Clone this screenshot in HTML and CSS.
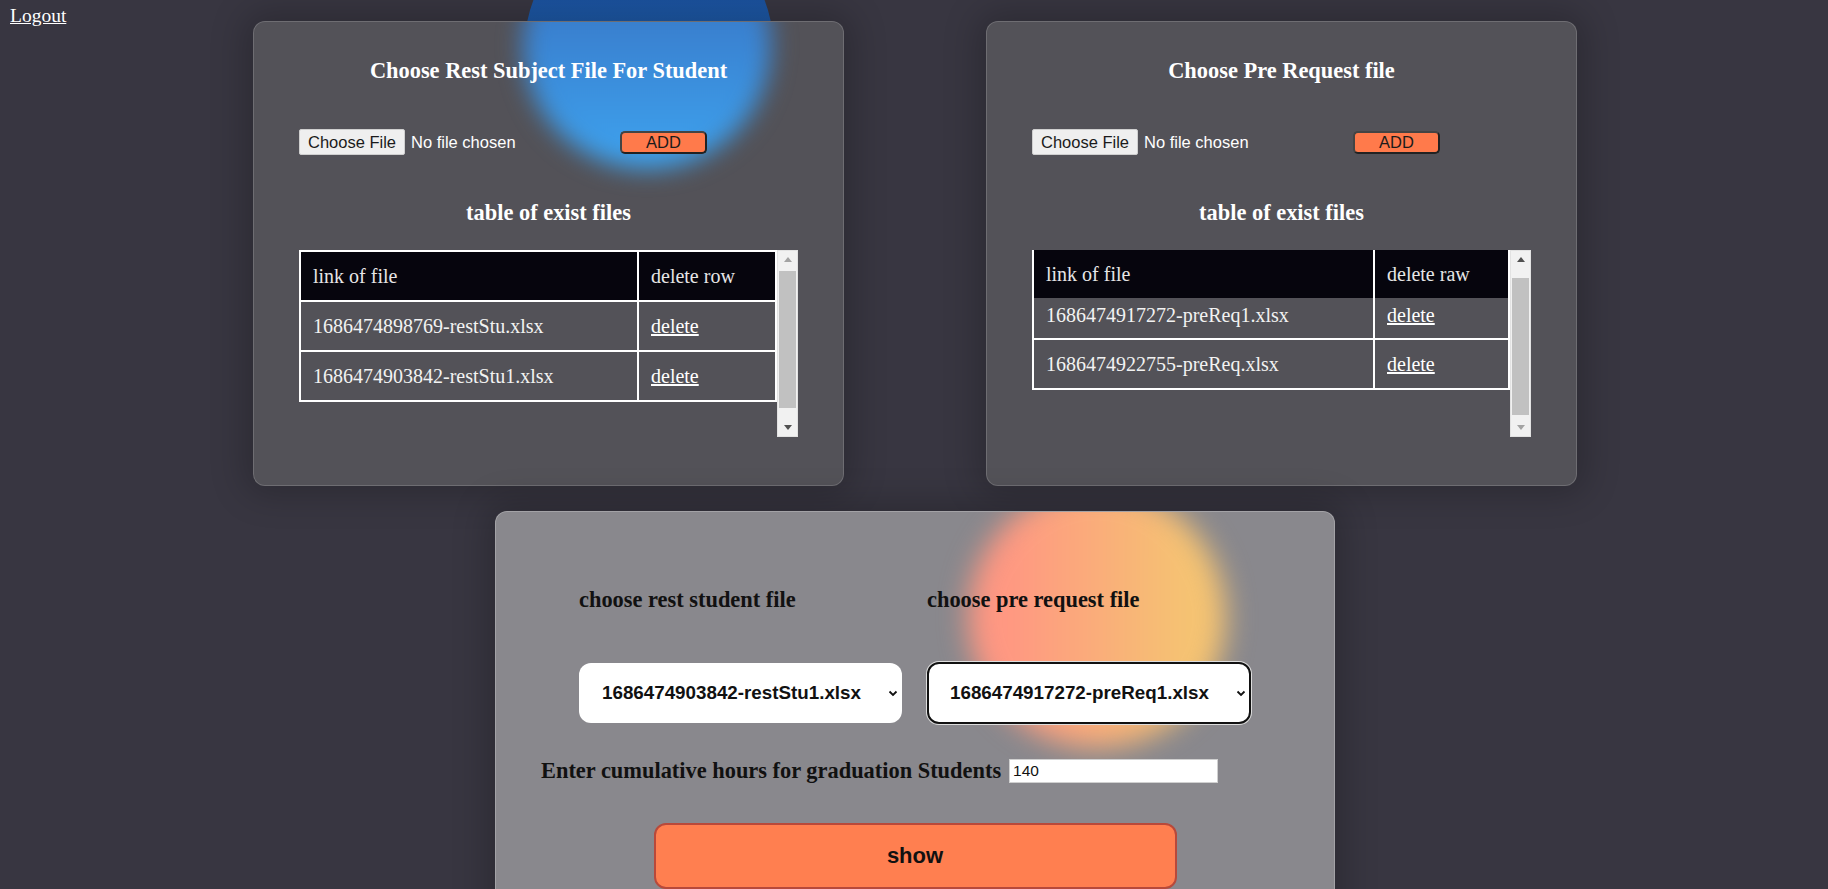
FILE: index.html
```html
<!DOCTYPE html>
<html lang="en">
<head>
    <meta charset="UTF-8">
    <meta name="viewport" content="width=device-width, initial-scale=1.0">
    <title>Upload Files</title>
    <link rel="stylesheet" href="styles.css">
</head>
<body>
    <a href="#" class="logout">Logout</a>
    <div class="blob-blue"></div>

    <div class="top-row">
        <div class="card">
            <div class="glow glow-blue"></div>
            <h3>Choose Rest Subject File For Student</h3>
            <div class="file-row">
                <div class="file-input">
                    <button class="file-btn">Choose File</button>
                    <span class="file-name">No file chosen</span>
                </div>
                <button class="add-btn">ADD</button>
            </div>
            <h3 class="table-title">table of exist files</h3>
            <div class="table-box">
                <div class="table-view">
                    <table class="files">
                        <thead>
                            <tr><th>link of file</th><th class="col-del">delete row</th></tr>
                        </thead>
                        <tbody>
                            <tr><td>1686474898769-restStu.xlsx</td><td><a href="#">delete</a></td></tr>
                            <tr><td>1686474903842-restStu1.xlsx</td><td><a href="#">delete</a></td></tr>
                        </tbody>
                    </table>
                </div>
                <div class="scrollbar">
                    <span class="arrow up off"></span>
                    <div class="track"><div class="thumb thumb-top"></div></div>
                    <span class="arrow down"></span>
                </div>
            </div>
        </div>

        <div class="card">
            <h3>Choose Pre Request file</h3>
            <div class="file-row">
                <div class="file-input">
                    <button class="file-btn">Choose File</button>
                    <span class="file-name">No file chosen</span>
                </div>
                <button class="add-btn">ADD</button>
            </div>
            <h3 class="table-title">table of exist files</h3>
            <div class="table-box">
                <div class="table-view">
                    <table class="files scrolled">
                        <thead>
                            <tr><th>link of file</th><th class="col-del-2">delete raw</th></tr>
                        </thead>
                        <tbody>
                            <tr class="cut"><td>1686474917272-preReq1.xlsx</td><td><a href="#">delete</a></td></tr>
                            <tr><td>1686474922755-preReq.xlsx</td><td><a href="#">delete</a></td></tr>
                        </tbody>
                    </table>
                </div>
                <div class="scrollbar">
                    <span class="arrow up"></span>
                    <div class="track"><div class="thumb thumb-bottom"></div></div>
                    <span class="arrow down off"></span>
                </div>
            </div>
        </div>
    </div>

    <div class="bottom-card">
        <div class="glow glow-orange"></div>
        <div class="choose-grid">
            <h3>choose rest student file</h3>
            <h3>choose pre request file</h3>
            <div class="select-box">
                <span>1686474903842-restStu1.xlsx</span>
                <svg width="10" height="7" viewBox="0 0 10 7"><path d="M1.5 1.5 L5 5 L8.5 1.5" fill="none" stroke="#111" stroke-width="1.8"/></svg>
            </div>
            <div class="select-box focused">
                <span>1686474917272-preReq1.xlsx</span>
                <svg width="10" height="7" viewBox="0 0 10 7"><path d="M1.5 1.5 L5 5 L8.5 1.5" fill="none" stroke="#111" stroke-width="1.8"/></svg>
            </div>
        </div>
        <div class="hours-row">
            <label for="hours">Enter cumulative hours for graduation Students</label>
            <input id="hours" type="text" value="140">
        </div>
        <button class="show-btn">show</button>
    </div>
</body>
</html>
```

FILE: styles.css
```css
body {
    margin: 0;
    height: 100vh;
    background-color: #383641;
    font-family: "Liberation Serif", "Times New Roman", serif;
    font-size: 20px;
    overflow: hidden;
    position: relative;
}

.logout {
    position: absolute;
    left: 10px;
    top: 5px;
    color: #fff;
    font-size: 19.5px;
    z-index: 2;
}

.blob-blue {
    position: absolute;
    left: 525px;
    top: -79px;
    width: 248px;
    height: 248px;
    border-radius: 50%;
    background: linear-gradient(#143a82, #2a86dc);
}

.top-row {
    position: relative;
    z-index: 1;
    display: flex;
    justify-content: center;
    gap: 142px;
    padding: 21px 0 0 2px;
}

.card {
    position: relative;
    box-sizing: border-box;
    width: 591px;
    height: 465px;
    padding: 36px 45px 0;
    background-color: #535258;
    border: 1px solid rgba(255, 255, 255, 0.16);
    border-radius: 12px;
    box-shadow: 0 0 35px 8px rgba(0, 0, 0, 0.22);
    overflow: hidden;
}

.glow {
    position: absolute;
    border-radius: 50%;
}

.glow-blue {
    left: 269px;
    top: -101px;
    width: 248px;
    height: 248px;
    background: linear-gradient(#3667b8, #3ea4f0);
    filter: blur(12px);
}

h3 {
    margin: 0;
    font-size: 22.4px;
    line-height: 26px;
    font-weight: bold;
}

.card h3 {
    position: relative;
    color: #fff;
    text-align: center;
}

.file-row {
    position: relative;
    display: flex;
    align-items: center;
    height: 26px;
    margin-top: 45px;
    font-family: "Liberation Sans", Arial, sans-serif;
    font-size: 16.5px;
}

.file-input {
    display: flex;
    align-items: center;
    width: 321px;
}

.file-btn {
    box-sizing: border-box;
    width: 106px;
    height: 26px;
    padding: 0;
    background: #efefef;
    border: 1px solid #cfcfcf;
    border-radius: 2px;
    color: #1b1b1b;
    font: inherit;
}

.file-name {
    margin-left: 6px;
    color: #fff;
}

.add-btn {
    box-sizing: border-box;
    width: 87px;
    height: 23px;
    padding: 0;
    background: #ff7a4b;
    border: 2px solid #222;
    border-top-color: #444;
    border-left-color: #444;
    border-radius: 5px;
    color: #1b1b1b;
    font: inherit;
    line-height: 18px;
}

.card .table-title {
    margin-top: 45px;
}

.table-box {
    position: relative;
    display: flex;
    height: 187px;
    margin-top: 24px;
}

.table-view {
    width: 478px;
    height: 187px;
    overflow: hidden;
}

.files {
    width: 478px;
    border-collapse: collapse;
    color: #f2f2f2;
    font-size: 20px;
}

.files th,
.files td {
    height: 48px;
    padding: 0 12px;
    border: 2px solid #fff;
    text-align: left;
    font-weight: normal;
}

.files th {
    background-color: #06050d;
    color: #e6e6e6;
}

.col-del {
    width: 112px;
}

.col-del-2 {
    width: 109px;
}

.files a {
    color: #fff;
}

.scrolled th {
    border-top-style: hidden;
    border-bottom-style: hidden;
}

.scrolled .cut td {
    height: 34px;
    padding-bottom: 6px;
}

.scrollbar {
    box-sizing: border-box;
    display: flex;
    flex-direction: column;
    width: 21px;
    height: 187px;
    background: #f1f1f1;
    border: 1px solid #e2e2e2;
}

.arrow {
    display: flex;
    justify-content: center;
    align-items: center;
    height: 17px;
}

.arrow::after {
    content: "";
    border-left: 4px solid transparent;
    border-right: 4px solid transparent;
}

.arrow.up::after {
    border-bottom: 5px solid #505050;
}

.arrow.down::after {
    border-top: 5px solid #505050;
}

.arrow.up.off::after {
    border-bottom-color: #a3a3a3;
}

.arrow.down.off::after {
    border-top-color: #a3a3a3;
}

.track {
    flex: 1;
    padding: 0 1px;
}

.thumb {
    height: 137px;
    background: #c1c1c1;
}

.thumb-top {
    margin-top: 3px;
}

.thumb-bottom {
    margin-top: 10px;
}

.bottom-card {
    position: relative;
    z-index: 1;
    box-sizing: border-box;
    width: 840px;
    height: 420px;
    margin: 25px auto 0;
    left: 1px;
    padding-top: 75px;
    background-color: #89888d;
    border: 1px solid rgba(255, 255, 255, 0.22);
    border-radius: 12px;
    box-shadow: 0 0 35px 8px rgba(0, 0, 0, 0.22);
    overflow: hidden;
}

.glow-orange {
    left: 472px;
    top: -26px;
    width: 258px;
    height: 262px;
    background: linear-gradient(90deg, #ff9782 15%, #f5c372 85%);
    filter: blur(14px);
}

.choose-grid {
    position: relative;
    display: grid;
    grid-template-columns: 323px 324px;
    column-gap: 25px;
    row-gap: 50px;
    justify-content: center;
}

.choose-grid h3 {
    color: #111;
}

.select-box {
    box-sizing: border-box;
    display: flex;
    justify-content: space-between;
    align-items: center;
    height: 60px;
    padding: 0 4px 0 23px;
    background: #fff;
    border-radius: 12px;
    color: #111;
    font-family: "Liberation Sans", Arial, sans-serif;
    font-size: 18.8px;
    font-weight: bold;
}

.select-box.focused {
    height: 62px;
    margin-top: -1px;
    border: 2px solid #111;
    padding: 0 3px 0 21px;
    box-shadow: 0 0 0 1px #ddd;
}

.hours-row {
    position: relative;
    display: flex;
    align-items: center;
    gap: 8px;
    margin: 34px 0 0 45px;
}

.hours-row label {
    color: #111;
    font-size: 22.4px;
    line-height: 26px;
    font-weight: bold;
}

.hours-row input {
    box-sizing: border-box;
    width: 209px;
    height: 24px;
    padding: 0 3px;
    background: #fff;
    border: 1px solid #d0d0d0;
    color: #111;
    font-family: "Liberation Sans", Arial, sans-serif;
    font-size: 15.5px;
}

.show-btn {
    position: relative;
    display: block;
    box-sizing: border-box;
    width: 523px;
    height: 66px;
    margin: 39px auto 0;
    background: #ff7f50;
    border: 2px solid #b8493a;
    border-radius: 12px;
    color: #111;
    font-family: "Liberation Sans", Arial, sans-serif;
    font-size: 22px;
    font-weight: bold;
}
```
